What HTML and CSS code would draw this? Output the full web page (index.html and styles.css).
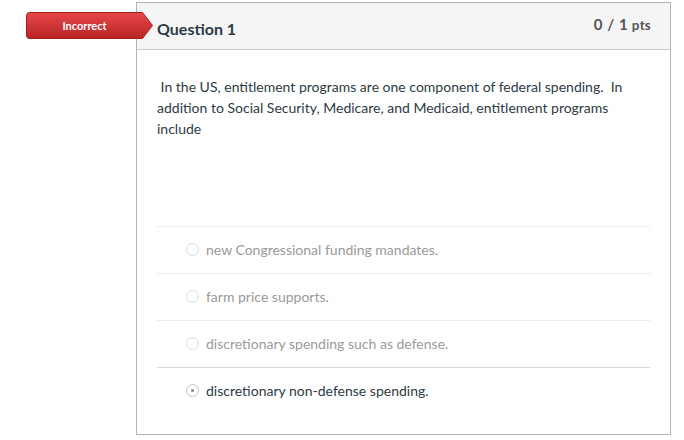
FILE: index.html
```html
<!DOCTYPE html>
<html>
<head>
<meta charset="utf-8">
<link rel="stylesheet" href="styles.css">
</head>
<body>
<div class="page">
  <div class="badge">
    <svg class="badge-shape" width="128" height="28" viewBox="0 0 128 28">
      <defs>
        <linearGradient id="rg" x1="0" y1="0" x2="0" y2="1">
          <stop offset="0" stop-color="#e6484b"/>
          <stop offset="1" stop-color="#b82424"/>
        </linearGradient>
      </defs>
      <path d="M3.5,0.5 H116.5 L126.5,13.5 L116.5,26.5 H3.5 Q0.5,26.5 0.5,23.5 V3.5 Q0.5,0.5 3.5,0.5 Z" fill="url(#rg)" stroke="#a51f1f" stroke-width="1"/>
    </svg>
    <span class="badge-text">Incorrect</span>
  </div>
  <div class="card">
    <div class="card-header">
      <div class="q-title">Question 1</div>
      <div class="q-pts"><span class="pts-num">0 / 1</span> pts</div>
    </div>
    <div class="card-body">
      <p class="q-text">&nbsp;In the US, entitlement programs are one component of federal spending.&nbsp; In addition to Social Security, Medicare, and Medicaid, entitlement programs include</p>
      <div class="answers">
        <div class="answer"><span class="radio"></span><span class="a-text">new Congressional funding mandates.</span></div>
        <div class="answer"><span class="radio"></span><span class="a-text">farm price supports.</span></div>
        <div class="answer"><span class="radio"></span><span class="a-text">discretionary spending such as defense.</span></div>
        <div class="answer selected"><span class="radio"><span class="dot"></span></span><span class="a-text">discretionary non-defense spending.</span></div>
      </div>
    </div>
  </div>
</div>
</body>
</html>
```
FILE: styles.css
```css
html, body {
  margin: 0;
  padding: 0;
  background: #ffffff;
}
body {
  font-family: Lato, "Open Sans", sans-serif;
  color: #2d3b45;
}
.page {
  position: relative;
  width: 684px;
  height: 440px;
  padding-top: 2px;
  box-sizing: border-box;
}
.badge {
  position: absolute;
  left: 26px;
  top: 12px;
  width: 128px;
  height: 28px;
}
.badge-shape {
  display: block;
}
.badge-text {
  position: absolute;
  left: 0;
  top: 0;
  width: 117px;
  height: 27px;
  line-height: 27px;
  text-align: center;
  color: #ffffff;
  font-size: 11px;
  font-weight: 700;
}
.card {
  margin-left: 136px;
  width: 535px;
  height: 433px;
  box-sizing: border-box;
  border: 1px solid #b4b4b4;
  display: flex;
  flex-direction: column;
}
.card-header {
  height: 46px;
  flex: none;
  background: #f5f5f5;
  border-bottom: 1px solid #c7cdd1;
  display: flex;
  justify-content: space-between;
  align-items: flex-start;
  padding: 0 19px 0 20px;
}
.q-title {
  font-size: 16px;
  font-weight: 700;
  color: #2d3b45;
  margin-top: 16px;
}
.q-pts {
  font-size: 13.5px;
  font-weight: 700;
  color: #555555;
  margin-top: 12px;
  letter-spacing: 0.2px;
}
.pts-num {
  font-size: 15px;
  letter-spacing: 0.6px;
}
.card-body {
  padding: 0 20px;
}
.q-text {
  margin: 26px 0 0 0;
  font-size: 14px;
  line-height: 21px;
  color: #2d3b45;
  height: 120px;
}
.answers {
  margin-top: 30px;
}
.answer {
  height: 46px;
  box-sizing: border-box;
  padding-bottom: 2px;
  border-top: 1px solid #ececec;
  display: flex;
  align-items: center;
  padding-left: 29px;
}
.answer {
  height: 47px;
}
.answer.selected {
  border-top-color: #d8d8d8;
}
.radio {
  width: 11px;
  height: 11px;
  border: 1px solid #dcdcdc;
  border-radius: 50%;
  background: #ffffff;
  margin-right: 7px;
  display: flex;
  align-items: center;
  justify-content: center;
  flex: none;
}
.selected .radio {
  border-color: #c4c4c4;
}
.dot {
  width: 3px;
  height: 3px;
  border-radius: 50%;
  background: #8a8a8a;
}
.a-text {
  font-size: 14px;
  color: #9a9a9a;
}
.selected .a-text {
  color: #2d3b45;
}
```
